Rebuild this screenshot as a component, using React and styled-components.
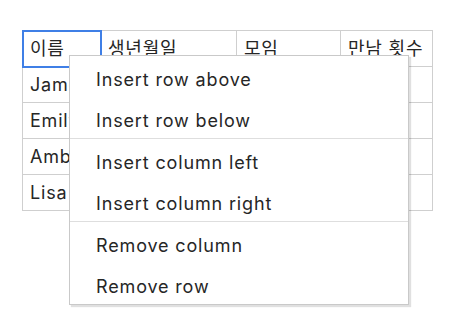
import React from "react";
import styled, { createGlobalStyle } from "styled-components";

const GlobalStyle = createGlobalStyle`
  html, body {
    margin: 0;
    padding: 0;
    background: #ffffff;
  }
  body {
    font-family: Inter, "Noto Sans CJK KR", "Noto Sans", sans-serif;
    color: #222;
  }
`;

const columns = [
  { title: "이름", width: 78 },
  { title: "생년월일", width: 136 },
  { title: "모임", width: 104 },
  { title: "만남 횟수", width: 92 },
];

const rows = ["James", "Emily", "Amber", "Lisa"];

const menuGroups = [
  ["Insert row above", "Insert row below"],
  ["Insert column left", "Insert column right"],
  ["Remove column", "Remove row"],
];

function App() {
  return (
    <>
      <GlobalStyle />
      <Page>
        <Table>
          <colgroup>
            {columns.map((c) => (
              <col key={c.title} style={{ width: c.width }} />
            ))}
          </colgroup>
          <tbody>
            <tr>
              {columns.map((c, i) => (
                <Cell key={c.title} selected={i === 0}>
                  {c.title}
                </Cell>
              ))}
            </tr>
            {rows.map((name) => (
              <tr key={name}>
                <Cell>{name}</Cell>
                <Cell />
                <Cell />
                <Cell />
              </tr>
            ))}
          </tbody>
        </Table>
        <Menu>
          {menuGroups.map((group, gi) => (
            <Group key={gi} first={gi === 0}>
              {group.map((label) => (
                <Item key={label}>{label}</Item>
              ))}
            </Group>
          ))}
        </Menu>
      </Page>
    </>
  );
}

export default App;

const Page = styled.div`
  position: relative;
  padding: 30px 0 0 22px;
  height: 330px;
  box-sizing: border-box;
`;

const Table = styled.table`
  border-collapse: collapse;
  table-layout: fixed;
  width: 411px;
`;

const Cell = styled.td`
  height: 35px;
  padding: 0 7px;
  border: 1px solid #cfcfcf;
  font-size: 18px;
  letter-spacing: 0.8px;
  line-height: 35px;
  white-space: nowrap;
  overflow: hidden;
  color: #262626;
  outline: ${(props) => (props.selected ? "2px solid #3f7fe6" : "none")};
  outline-offset: -1px;
`;

const Menu = styled.div`
  position: absolute;
  left: 69px;
  top: 55px;
  width: 340px;
  box-sizing: border-box;
  background: #fff;
  border: 1px solid #c9c9c9;
  box-shadow: 2px 2px 1px rgba(0, 0, 0, 0.12);
`;

const Group = styled.div`
  border-top: ${(props) => (props.first ? "none" : "1px solid #dedede")};
`;

const Item = styled.div`
  height: 41px;
  line-height: 41px;
  padding: 3px 0 0 26px;
  box-sizing: border-box;
  font-size: 18px;
  letter-spacing: 0.85px;
  color: #262626;
  white-space: nowrap;
`;
